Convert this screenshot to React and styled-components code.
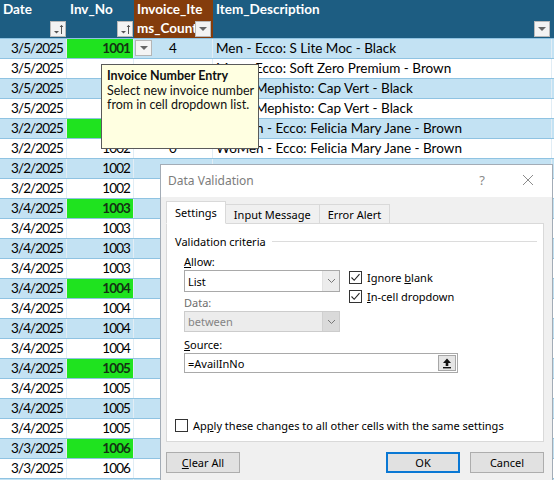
import React from 'react'
import styled, { createGlobalStyle } from 'styled-components'

const GlobalStyle = createGlobalStyle`
  html, body {
    margin: 0;
    padding: 0;
    background: #fff;
  }
  body {
    width: 554px;
    height: 480px;
    overflow: hidden;
  }
`

const COLS = '67px 67px 79px 339px 1fr'

const Screen = styled.div`
  position: relative;
  width: 554px;
  height: 480px;
  overflow: hidden;
  font-family: Lato, "Liberation Sans", sans-serif;
  color: #000;
`

const Sheet = styled.div`
  display: flex;
  flex-direction: column;
`

const HeaderRow = styled.div`
  display: grid;
  grid-template-columns: ${COLS};
  height: 38px;
  background: #1d5d82;
`

const HeadCell = styled.div`
  position: relative;
  padding: 0 3px;
  color: #fff;
  font-weight: 700;
  font-size: 13.5px;
  line-height: 19px;
  white-space: nowrap;
  overflow: hidden;
  background: ${p => (p.$accent ? '#843c0c' : 'transparent')};
`

const FilterButton = styled.div`
  position: absolute;
  right: ${p => p.$right ?? 1}px;
  bottom: 1px;
  width: 16px;
  height: 16px;
  box-sizing: border-box;
  background: #f3f3f3;
  border: 1px solid #b9b9b9;
  display: flex;
  align-items: center;
  justify-content: center;
`

const Row = styled.div`
  display: grid;
  grid-template-columns: ${COLS};
  height: 20px;
  box-sizing: border-box;
  border-top: 1px solid #8fc3e2;
  background: ${p => (p.$band ? '#c3e2f3' : '#fff')};
  font-size: 13.5px;
  line-height: 19px;
`

const Cell = styled.div`
  padding: 0 3px;
  text-align: ${p => p.$align || 'left'};
  border-right: 1px solid #e1edf5;
  white-space: nowrap;
  overflow: hidden;
  letter-spacing: ${p => (p.$num ? '-0.9px' : '0')};
  background: ${p => (p.$mark ? '#1fe31f' : 'transparent')};
  font-weight: ${p => (p.$mark ? 700 : 400)};
  color: ${p => (p.$mark ? '#123312' : '#000')};
`

const CellDrop = styled.div`
  position: absolute;
  left: 135px;
  top: 40px;
  width: 17px;
  height: 16px;
  box-sizing: border-box;
  background: #f4f4f4;
  border: 1px solid #b5b5b5;
  display: flex;
  align-items: center;
  justify-content: center;
`

const Tip = styled.div`
  position: absolute;
  left: 101px;
  top: 64px;
  width: 158px;
  height: 85px;
  box-sizing: border-box;
  background: #ffffe1;
  border: 1px solid #5a5a5a;
  padding: 4px 5px;
  font-size: 12.5px;
  line-height: 14.7px;
  color: #111;
  white-space: nowrap;
`

const TipTitle = styled.div`
  font-weight: 700;
`

/* dialog */

const Dialog = styled.div`
  position: absolute;
  left: 160px;
  top: 164px;
  width: 393px;
  height: 330px;
  box-sizing: border-box;
  border: 1px solid #a3acb6;
  background: #f0f0f0;
  font-family: "Noto Sans", "Open Sans", sans-serif;
  font-size: 11px;
  color: #000;
  display: flex;
  flex-direction: column;
`

const TitleBar = styled.div`
  height: 32px;
  box-sizing: border-box;
  padding: 0 0 2px 7px;
  background: #fff;
  display: flex;
  align-items: center;
  color: #7c7c7c;
  font-size: 12px;
`

const TitleText = styled.div`
  flex: 1;
`

const TitleButton = styled.div`
  width: ${p => p.$w}px;
  display: flex;
  justify-content: center;
  color: #8a8a8a;
  font-size: 13px;
`

const Body = styled.div`
  padding: 4px 8px 0 5px;
  display: flex;
  flex-direction: column;
`

const Tabs = styled.div`
  display: flex;
  align-items: flex-end;
  height: 23px;
  position: relative;
  z-index: 1;
  margin-bottom: -1px;
`

const Tab = styled.div`
  height: ${p => (p.$active ? 23 : 20)}px;
  box-sizing: border-box;
  padding: 0 ${p => p.$pad}px;
  display: flex;
  align-items: center;
  background: ${p => (p.$active ? '#fff' : '#f0f0f0')};
  border: 1px solid #d9d9d9;
  border-bottom: ${p => (p.$active ? '1px solid #fff' : '1px solid #d9d9d9')};
  border-left: ${p => (p.$first ? '1px solid #d9d9d9' : 'none')};
  font-size: 11px;
`

const Panel = styled.div`
  height: 219px;
  box-sizing: border-box;
  background: #fff;
  border: 1px solid #d9d9d9;
  padding: 10px 6px 6px 8px;
  display: flex;
  flex-direction: column;
`

const Group = styled.div`
  display: flex;
  align-items: center;
  gap: 6px;
  height: 15px;
  font-size: 11px;
`

const GroupLine = styled.div`
  flex: 1;
  height: 1px;
  background: #dcdcdc;
`

const Fields = styled.div`
  padding-left: 9px;
  display: flex;
  flex-direction: column;
`

const TopRow = styled.div`
  display: flex;
  gap: 9px;
`

const LeftCol = styled.div`
  width: 156px;
  display: flex;
  flex-direction: column;
`

const Label = styled.div`
  height: 15px;
  line-height: 15px;
  margin-top: ${p => p.$mt}px;
  margin-bottom: ${p => p.$mb ?? 1}px;
  color: ${p => (p.$dim ? '#6d6d6d' : '#000')};
  font-size: 11px;
`

const Select = styled.div`
  height: ${p => p.$h}px;
  box-sizing: border-box;
  display: flex;
  border: 1px solid ${p => (p.$disabled ? '#cccccc' : '#a9a9a9')};
  background: ${p => (p.$disabled ? '#ececec' : '#fff')};
  color: ${p => (p.$disabled ? '#848484' : '#000')};
  font-size: 11px;
`

const SelectValue = styled.div`
  flex: 1;
  padding-left: 3px;
  display: flex;
  align-items: center;
`

const SelectArrow = styled.div`
  width: 16px;
  display: flex;
  align-items: center;
  justify-content: center;
  background: ${p => (p.$disabled ? '#dadada' : '#ececec')};
  border-left: 1px solid ${p => (p.$disabled ? '#d0d0d0' : '#e2e2e2')};
`

const CheckCol = styled.div`
  margin-top: 19px;
  display: flex;
  flex-direction: column;
`

const CheckRow = styled.div`
  height: 19px;
  display: flex;
  align-items: center;
  gap: 5px;
  font-size: 11px;
`

const Box = styled.div`
  width: 13px;
  height: 13px;
  box-sizing: border-box;
  border: 1px solid #333;
  background: #fff;
  display: flex;
  align-items: center;
  justify-content: center;
`

const SourceInput = styled.div`
  width: 274px;
  height: 20px;
  box-sizing: border-box;
  border: 1px solid #a9a9a9;
  background: #fff;
  display: flex;
  align-items: center;
  padding: 0 1px 0 3px;
  font-size: 11px;
`

const SourceText = styled.div`
  flex: 1;
`

const RefButton = styled.div`
  width: 18px;
  height: 16px;
  box-sizing: border-box;
  background: #e5e5e5;
  border: 1px solid #a7a7a7;
  display: flex;
  align-items: center;
  justify-content: center;
`

const Bottom = styled.div`
  margin-top: auto;
`

const Buttons = styled.div`
  margin-top: 10px;
  display: flex;
  gap: 10px;
`

const Button = styled.div`
  width: 74px;
  height: 21px;
  box-sizing: border-box;
  background: #e1e1e1;
  border: ${p => (p.$primary ? '2px solid #0a78d4' : '1px solid #adadad')};
  display: flex;
  align-items: center;
  justify-content: center;
  font-size: 11px;
  margin-left: ${p => (p.$push ? 'auto' : '0')};
`

const SortIcon = () => (
  <svg width="12" height="12" viewBox="0 0 12 12">
    <polygon points="2,8 7,8 4.5,10.5" fill="#555" />
    <line x1="9.5" y1="2.5" x2="9.5" y2="11" stroke="#555" strokeWidth="1" />
    <polyline points="8,4 9.5,2.3 11,4" fill="none" stroke="#555" strokeWidth="1" />
  </svg>
)

const DropIcon = () => (
  <svg width="10" height="6" viewBox="0 0 10 6">
    <polygon points="1,1 9,1 5,5" fill="#666" />
  </svg>
)

const Chevron = () => (
  <svg width="9" height="6" viewBox="0 0 9 6">
    <polyline points="1,1 4.5,4.5 8,1" fill="none" stroke="#777" strokeWidth="1" />
  </svg>
)

const Check = () => (
  <svg width="11" height="11" viewBox="0 0 11 11">
    <polyline points="1.5,5.5 4.2,8.3 9.5,2.2" fill="none" stroke="#222" strokeWidth="1.1" />
  </svg>
)

const CloseIcon = () => (
  <svg width="12" height="12" viewBox="0 0 12 12">
    <line x1="1" y1="1" x2="11" y2="11" stroke="#8c8c8c" strokeWidth="1" />
    <line x1="11" y1="1" x2="1" y2="11" stroke="#8c8c8c" strokeWidth="1" />
  </svg>
)

const UpArrow = () => (
  <svg width="10" height="11" viewBox="0 0 10 11">
    <polygon points="5,0.5 9,5 6.3,5 6.3,8 3.7,8 3.7,5 1,5" fill="#111" />
    <rect x="1" y="9" width="8" height="1.4" fill="#111" />
  </svg>
)

// date, inv_no, count, description, first row of an invoice
const rows = [
  ['3/5/2025', '1001', '4', 'Men - Ecco: S Lite Moc - Black', true],
  ['3/5/2025', '', '', 'Men - Ecco: Soft Zero Premium - Brown'],
  ['3/5/2025', '', '', 'Men - Mephisto: Cap Vert - Black'],
  ['3/5/2025', '', '', 'Men - Mephisto: Cap Vert - Black'],
  ['3/2/2025', '', '', 'WoMen - Ecco: Felicia Mary Jane - Brown', true],
  ['3/2/2025', '1002', '0', 'WoMen - Ecco: Felicia Mary Jane - Brown'],
  ['3/2/2025', '1002', '', ''],
  ['3/2/2025', '1002', '', ''],
  ['3/4/2025', '1003', '', '', true],
  ['3/4/2025', '1003', '', ''],
  ['3/4/2025', '1003', '', ''],
  ['3/4/2025', '1003', '', ''],
  ['3/4/2025', '1004', '', '', true],
  ['3/4/2025', '1004', '', ''],
  ['3/4/2025', '1004', '', ''],
  ['3/4/2025', '1004', '', ''],
  ['3/4/2025', '1005', '', '', true],
  ['3/4/2025', '1005', '', ''],
  ['3/4/2025', '1005', '', ''],
  ['3/4/2025', '1005', '', ''],
  ['3/3/2025', '1006', '', '', true],
  ['3/3/2025', '1006', '', ''],
  ['', '', '', ''],
]

export default function App() {
  return (
    <Screen>
      <GlobalStyle />
      <Sheet>
        <HeaderRow>
          <HeadCell>
            Date
            <FilterButton><SortIcon /></FilterButton>
          </HeadCell>
          <HeadCell>
            Inv_No
            <FilterButton><SortIcon /></FilterButton>
          </HeadCell>
          <HeadCell $accent>
            Invoice_Ite<br />ms_Count
            <FilterButton $right={2}><DropIcon /></FilterButton>
          </HeadCell>
          <HeadCell>
            Item_Description
            <FilterButton $right={2}><DropIcon /></FilterButton>
          </HeadCell>
          <HeadCell />
        </HeaderRow>
        {rows.map((r, i) => (
          <Row key={i} $band={i % 2 === 0}>
            <Cell $align="right" $num>{r[0]}</Cell>
            <Cell $align="right" $num $mark={r[4]}>{r[1]}</Cell>
            <Cell $align="center">{r[2]}</Cell>
            <Cell>{r[3]}</Cell>
            <Cell />
          </Row>
        ))}
      </Sheet>

      <CellDrop><DropIcon /></CellDrop>

      <Tip>
        <TipTitle>Invoice Number Entry</TipTitle>
        <div>Select new invoice number</div>
        <div>from in cell dropdown list.</div>
      </Tip>

      <Dialog>
        <TitleBar>
          <TitleText>Data Validation</TitleText>
          <TitleButton $w={44}>?</TitleButton>
          <TitleButton $w={48}><CloseIcon /></TitleButton>
        </TitleBar>
        <Body>
          <Tabs>
            <Tab $active $first $pad={8}>Settings</Tab>
            <Tab $pad={8}>Input Message</Tab>
            <Tab $pad={8}>Error Alert</Tab>
          </Tabs>
          <Panel>
            <Group>
              Validation criteria
              <GroupLine />
            </Group>
            <Fields>
              <TopRow>
                <LeftCol>
                  <Label $mt={5}><u>A</u>llow:</Label>
                  <Select $h={22}>
                    <SelectValue>List</SelectValue>
                    <SelectArrow><Chevron /></SelectArrow>
                  </Select>
                  <Label $mt={3} $dim>Data:</Label>
                  <Select $h={21} $disabled>
                    <SelectValue>between</SelectValue>
                    <SelectArrow $disabled><Chevron /></SelectArrow>
                  </Select>
                </LeftCol>
                <CheckCol>
                  <CheckRow>
                    <Box><Check /></Box>
                    <span>Ignore <u>b</u>lank</span>
                  </CheckRow>
                  <CheckRow>
                    <Box><Check /></Box>
                    <span><u>I</u>n-cell dropdown</span>
                  </CheckRow>
                </CheckCol>
              </TopRow>
              <Label $mt={5}><u>S</u>ource:</Label>
              <SourceInput>
                <SourceText>=AvailInNo</SourceText>
                <RefButton><UpArrow /></RefButton>
              </SourceInput>
            </Fields>
            <Bottom>
              <CheckRow>
                <Box />
                <span>Ap<u>p</u>ly these changes to all other cells with the same settings</span>
              </CheckRow>
            </Bottom>
          </Panel>
          <Buttons>
            <Button><span><u>C</u>lear All</span></Button>
            <Button $push $primary>OK</Button>
            <Button>Cancel</Button>
          </Buttons>
        </Body>
      </Dialog>
    </Screen>
  )
}
